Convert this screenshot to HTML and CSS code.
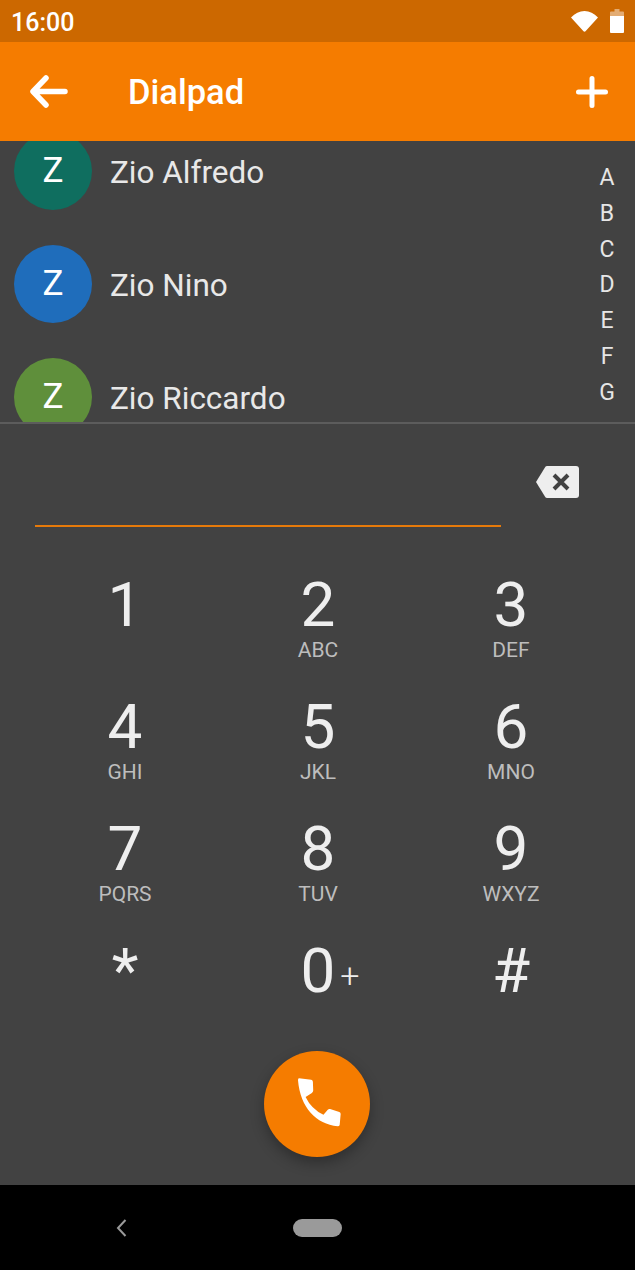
FILE: index.html
```html
<!DOCTYPE html>
<html lang="en">

<head>
  <meta charset="UTF-8">
  <meta name="viewport" content="width=device-width, initial-scale=1.0">
  <title>Dialpad</title>
  <link rel="stylesheet" href="styles.css">
</head>

<body>
  <div class="main">
    <div class="statusBar">
      <span class="time">16:00</span>
      <div class="statusIcons">
        <svg class="wifi" viewBox="0 0 27 21" width="27" height="21">
          <path d="M0 6.500C4 2.500 8.500 0 13.500 0S23 2.500 27 6.500L14.500 20.300c-.5.600-1.500.600-2 0z" fill="#fff" />
        </svg>
        <svg class="battery" viewBox="0 0 14 24" width="14" height="24">
          <path d="M4.500 0h5v2.500H13a1 1 0 0 1 1 1V7H0V3.500a1 1 0 0 1 1-1h3.500z" fill="#fff" opacity="0.45" />
          <path d="M0 7h14v16a1 1 0 0 1-1 1H1a1 1 0 0 1-1-1z" fill="#fff" />
        </svg>
      </div>
    </div>

    <div class="toolbar">
      <svg class="backArrow" viewBox="0 0 38 33" width="38" height="33">
        <path d="M35 16.500H4M16 3L3 16.500 16 30" fill="none" stroke="#fff" stroke-width="5.500" stroke-linecap="round" stroke-linejoin="round" />
      </svg>
      <span class="title">Dialpad</span>
      <svg class="plus" viewBox="0 0 32 32" width="32" height="32">
        <path d="M16 2.500v27M2.500 16h27" fill="none" stroke="#fff" stroke-width="5" stroke-linecap="round" />
      </svg>
    </div>

    <div class="listArea">
      <div class="contacts">
        <div class="contact">
          <div class="avatar teal">Z</div>
          <span class="name">Zio Alfredo</span>
        </div>
        <div class="contact">
          <div class="avatar blue">Z</div>
          <span class="name">Zio Nino</span>
        </div>
        <div class="contact">
          <div class="avatar green">Z</div>
          <span class="name">Zio Riccardo</span>
        </div>
      </div>
      <div class="alphaIndex">
        <span>A</span>
        <span>B</span>
        <span>C</span>
        <span>D</span>
        <span>E</span>
        <span>F</span>
        <span>G</span>
      </div>
    </div>

    <div class="pad">
      <div class="inputRow">
        <div class="input"></div>
        <svg class="backspace" viewBox="0 0 43 32" width="43" height="32">
          <path d="M11 0h29a3 3 0 0 1 3 3v26a3 3 0 0 1-3 3H11a2 2 0 0 1-1.600-.8L0 16 9.400.8A2 2 0 0 1 11 0z" fill="#eee" />
          <path d="M18 9l14 14M32 9L18 23" fill="none" stroke="#424242" stroke-width="4" />
        </svg>
      </div>

      <div class="keys">
        <div class="key"><span class="digit">1</span></div>
        <div class="key"><span class="digit">2</span><span class="letters">ABC</span></div>
        <div class="key"><span class="digit">3</span><span class="letters">DEF</span></div>
        <div class="key"><span class="digit">4</span><span class="letters">GHI</span></div>
        <div class="key"><span class="digit">5</span><span class="letters">JKL</span></div>
        <div class="key"><span class="digit">6</span><span class="letters">MNO</span></div>
        <div class="key"><span class="digit">7</span><span class="letters">PQRS</span></div>
        <div class="key"><span class="digit">8</span><span class="letters">TUV</span></div>
        <div class="key"><span class="digit">9</span><span class="letters">WXYZ</span></div>
        <div class="key"><span class="digit">*</span></div>
        <div class="key"><span class="digit zero">0<span class="zeroPlus">+</span></span></div>
        <div class="key"><span class="digit">#</span></div>
      </div>

      <div class="callButton">
        <svg class="callIcon" viewBox="715 146 130 146" width="43" height="49">
          <path d="M718 146L755 150Q760 151 760 156L761 183Q761 187 757 190L738 202Q755 238 792 256L805 241Q808 238 812 239L840 248Q844 249 844 254L841 287Q840 291 835 291C770 285 722 235 715 152Q715 146 718 146Z" fill="#fff" />
        </svg>
      </div>
    </div>

    <div class="navBar">
      <svg class="navBack" viewBox="0 0 11 18" width="11" height="18">
        <path d="M9.500 1L2 9l7.500 8" fill="none" stroke="#9a9a9a" stroke-width="2" />
      </svg>
      <div class="navHome"></div>
    </div>
  </div>
</body>

</html>
```

FILE: styles.css
```css
html,
body {
  margin: 0;
  padding: 0;
}

body {
  font-family: Roboto, "Liberation Sans", sans-serif;
  background-color: #424242;
}

.main {
  display: flex;
  flex-direction: column;
  width: 635px;
  height: 1270px;
  overflow: hidden;
}

.statusBar {
  display: flex;
  align-items: center;
  justify-content: space-between;
  height: 42px;
  padding: 0 11px 0 10px;
  box-sizing: border-box;
  background-color: #cc6800;
  color: #fff;
}

.time {
  padding: 2px 0 0 1px;
  font-size: 25px;
  font-weight: 500;
}

.statusIcons {
  display: flex;
  align-items: center;
  gap: 12px;
}

.toolbar {
  display: flex;
  align-items: center;
  height: 99px;
  padding: 0 27px 0 30px;
  box-sizing: border-box;
  background-color: #f57c00;
  color: #fff;
}

.title {
  flex: 1;
  margin-left: 60px;
  font-size: 34.5px;
  font-weight: 500;
}

.listArea {
  display: flex;
  height: 281px;
  overflow: hidden;
}

.contacts {
  flex: 1;
  margin-top: -27px;
}

.contact {
  display: flex;
  align-items: center;
  height: 113px;
  padding-left: 14px;
}

.avatar {
  width: 78px;
  height: 78px;
  border-radius: 50%;
  line-height: 78px;
  text-align: center;
  font-size: 35px;
  color: #fff;
}

.avatar.teal {
  background-color: #0f6e5f;
}

.avatar.blue {
  background-color: #1f6dbb;
}

.avatar.green {
  background-color: #5f8f3b;
}

.name {
  margin-left: 18px;
  padding-top: 3px;
  font-size: 31.5px;
  color: #e8e8e8;
}

.alphaIndex {
  display: flex;
  flex-direction: column;
  align-items: center;
  width: 56px;
  padding-top: 19px;
  box-sizing: border-box;
  font-size: 23px;
  color: #e6e6e6;
}

.alphaIndex span {
  height: 35.8px;
  line-height: 35.8px;
}

.pad {
  position: relative;
  flex: 1;
  border-top: 2px solid #5c5c5c;
}

.inputRow {
  display: flex;
  height: 103px;
  padding: 0 56px 0 35px;
  box-sizing: border-box;
}

.input {
  flex: 1;
  border-bottom: 2px solid #e67a0a;
}

.backspace {
  margin: 42px 0 0 35px;
}

.keys {
  display: grid;
  grid-template-columns: repeat(3, 193px);
  grid-auto-rows: 122px;
  padding: 44px 28px 0 28.5px;
}

.key {
  display: flex;
  flex-direction: column;
  align-items: center;
}

.digit {
  height: 68px;
  line-height: 68px;
  font-size: 62px;
  color: #eee;
}

.letters {
  height: 26px;
  margin-top: -2px;
  line-height: 26px;
  font-size: 21px;
  color: #bdbdbd;
}

.zero {
  margin-left: 24px;
}

.zeroPlus {
  margin-left: 5px;
  font-size: 34px;
  font-weight: 300;
  vertical-align: 5px;
}

.callButton {
  position: absolute;
  left: 264px;
  top: 627px;
  display: flex;
  align-items: center;
  justify-content: center;
  width: 106px;
  height: 106px;
  border-radius: 50%;
  background-color: #f57c00;
  box-shadow: 0 6px 14px rgba(0, 0, 0, 0.3);
}

.callIcon {
  margin: 0 0 3px 4px;
}

.navBar {
  position: relative;
  display: flex;
  align-items: center;
  height: 85px;
  padding-left: 116px;
  background-color: #000;
}

.navHome {
  width: 49px;
  height: 18px;
  margin-left: 166px;
  border-radius: 9px;
  background-color: #9a9a9a;
}
```
